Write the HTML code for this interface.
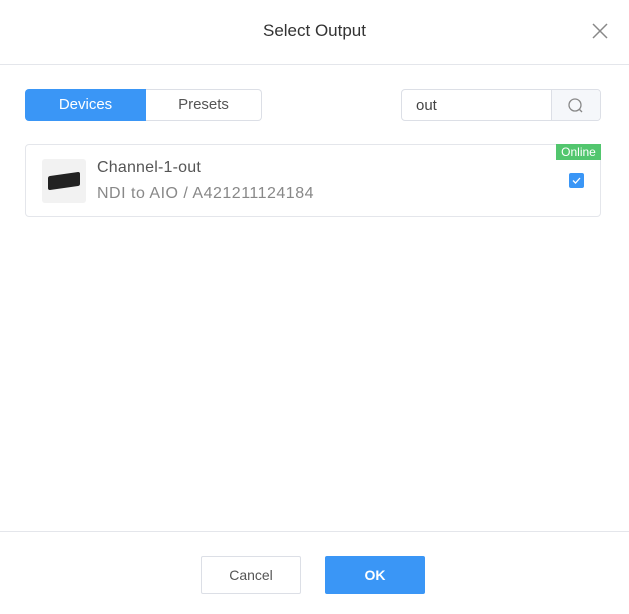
<!DOCTYPE html>
<html><head><style>
body{margin:0;width:629px;height:614px;background:#fff;font-family:"Liberation Sans",sans-serif;position:relative;overflow:hidden}
.a{position:absolute;box-sizing:border-box}
</style></head><body>
<div class="a" style="left:0;top:21px;width:629px;text-align:center;font-size:17px;color:#333">Select Output</div>
<svg class="a" style="left:591px;top:22px" width="18" height="18"><path d="M2 2L16 16M16 2L2 16" stroke="#888" stroke-width="1.5"/></svg>
<div class="a" style="left:0;top:64px;width:629px;height:1px;background:#e4e6eb"></div>
<div class="a" style="left:25px;top:89px;width:121px;height:32px;background:#3a96f6;border-radius:4px 0 0 4px;color:#fff;font-size:15px;text-align:center;line-height:32px">Devices</div>
<div class="a" style="left:146px;top:89px;width:116px;height:32px;border:1px solid #dcdfe6;border-left:none;border-radius:0 4px 4px 0;color:#555;font-size:15px;text-align:center;line-height:30px">Presets</div>
<div class="a" style="left:401px;top:89px;width:200px;height:32px;border:1px solid #dcdfe6;border-radius:4px"></div>
<div class="a" style="left:551px;top:90px;width:49px;height:30px;background:#f5f7fa;border-left:1px solid #dcdfe6;border-radius:0 4px 4px 0"></div>
<svg class="a" style="left:567px;top:97px" width="18" height="18"><circle cx="8" cy="8" r="6" fill="none" stroke="#888" stroke-width="1.3"/><path d="M12.5 12.5L15 15" stroke="#888" stroke-width="1.3"/></svg>
<div class="a" style="left:416px;top:97px;font-size:15px;color:#444">out</div>
<div class="a" style="left:25px;top:144px;width:576px;height:73px;border:1px solid #e4e6eb;border-radius:4px"></div>
<div class="a" style="left:556px;top:144px;width:45px;height:16px;background:#52c66e;color:#fff;font-size:12px;text-align:center;line-height:16px">Online</div>
<div class="a" style="left:569px;top:173px;width:15px;height:15px;background:#3a96f6;border-radius:2px"></div>
<svg class="a" style="left:569px;top:173px" width="15" height="15"><path d="M4 7.5L6.5 10L11 5" stroke="#fff" stroke-width="1.3" fill="none"/></svg>
<div class="a" style="left:42px;top:159px;width:44px;height:44px;background:#f2f2f2;border-radius:3px"></div>
<div class="a" style="left:48px;top:174px;width:32px;height:14px;background:#222;border-radius:2px;transform:skewY(-8deg)"></div>
<div class="a" style="left:97px;top:159px;font-size:16px;color:#555;letter-spacing:0.2px">Channel-1-out</div>
<div class="a" style="left:97px;top:185px;font-size:16px;color:#888;letter-spacing:0.5px">NDI to AIO / A421211124184</div>
<div class="a" style="left:0;top:531px;width:629px;height:1px;background:#e4e6eb"></div>
<div class="a" style="left:201px;top:556px;width:100px;height:38px;border:1px solid #dcdfe6;border-radius:2px;font-size:14px;color:#555;text-align:center;line-height:36px">Cancel</div>
<div class="a" style="left:325px;top:556px;width:100px;height:38px;background:#3a96f6;border-radius:2px;font-size:14px;color:#fff;text-align:center;line-height:38px;font-weight:bold">OK</div>
</body></html>
